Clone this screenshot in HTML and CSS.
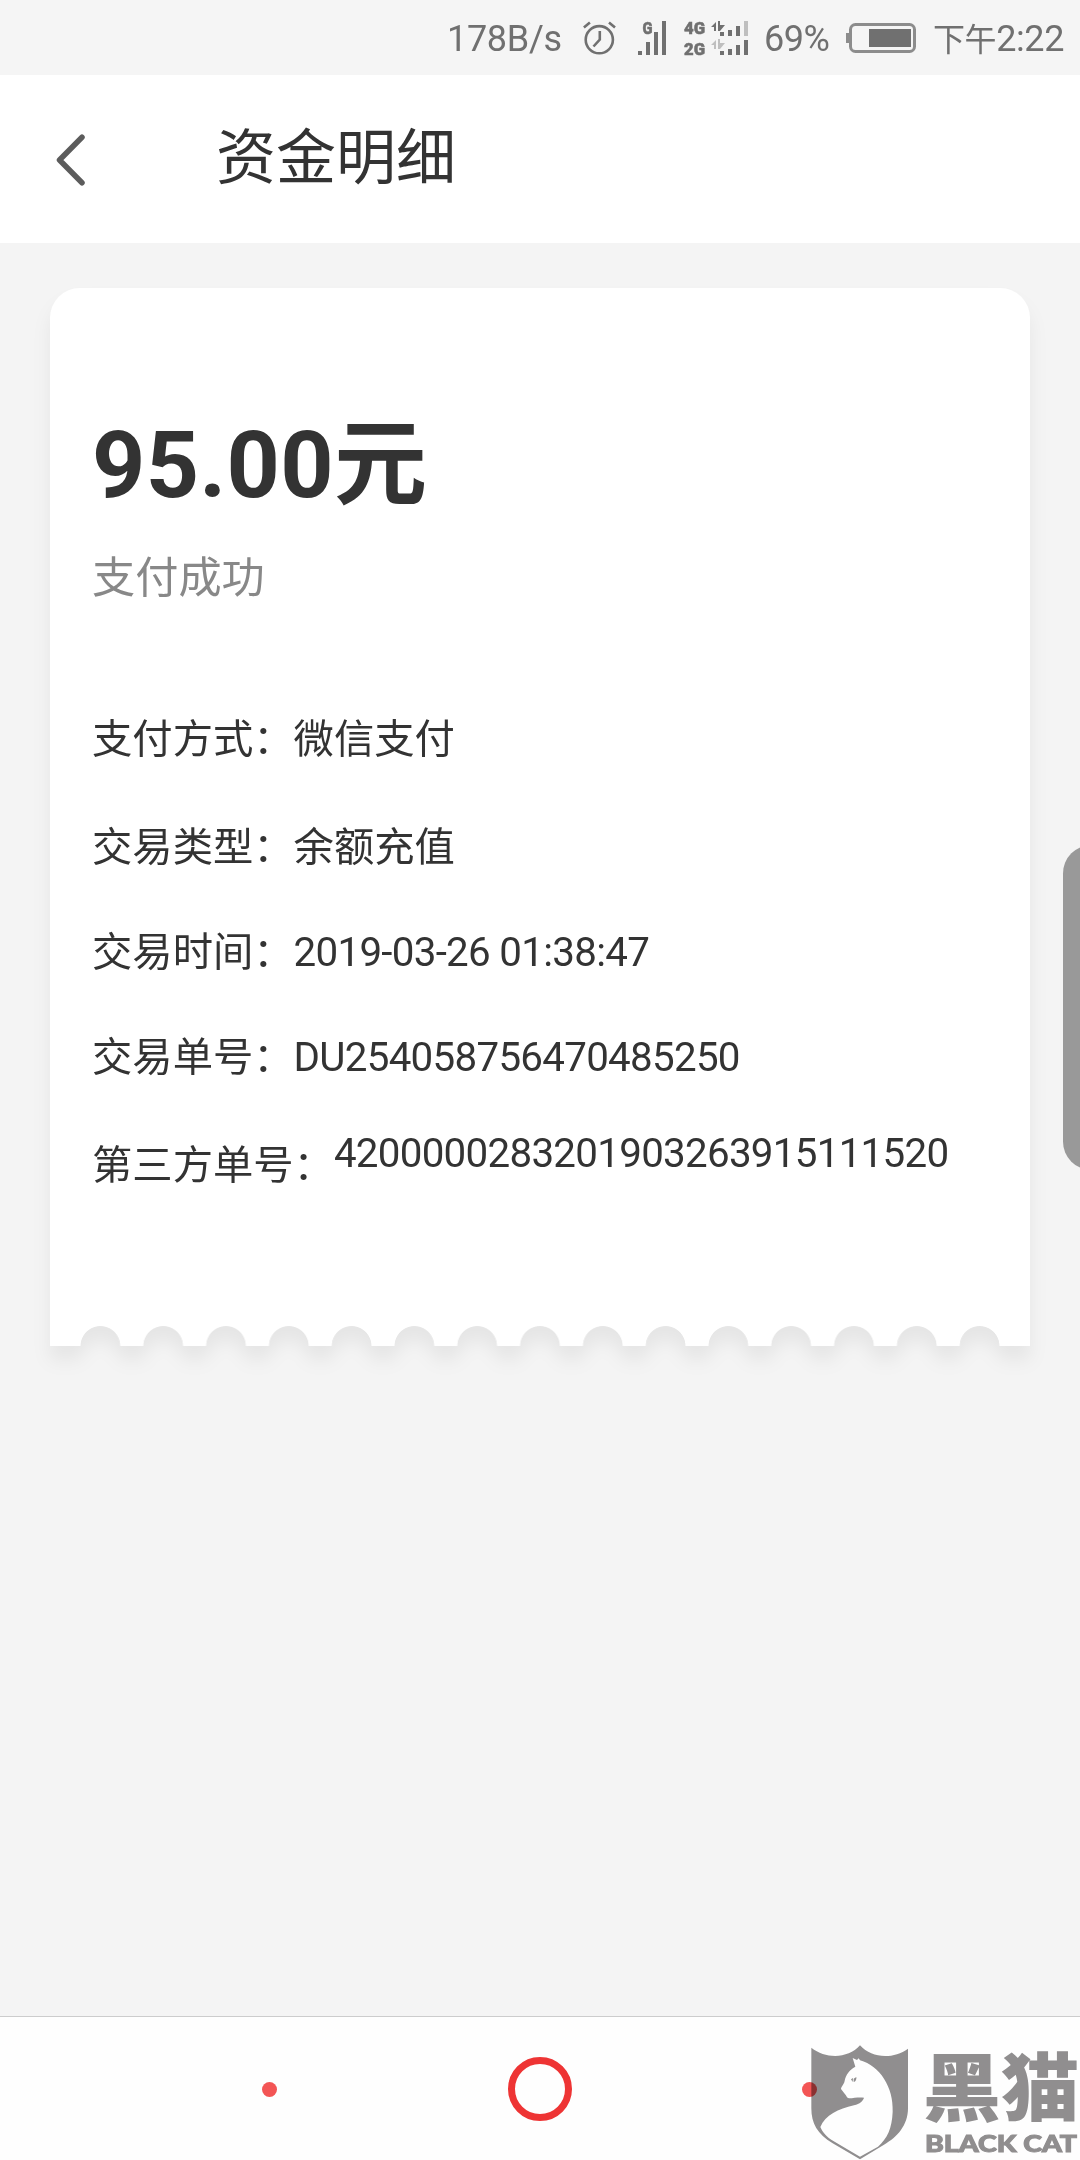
FILE: index.html
```
<!DOCTYPE html>
<html lang="zh-CN">
<head>
    <meta charset="UTF-8">
    <meta name="viewport" content="width=device-width, initial-scale=1.0">
    <title>资金明细</title>
    <link rel="stylesheet" href="styles.css">
</head>
<body>
    <div class="status-bar">
        <span class="net-speed">178B/s</span>
        <svg class="icon-alarm" width="34" height="34" viewBox="0 0 34 34" fill="none" stroke="#707070" stroke-width="2.6">
            <circle cx="16.3" cy="18.7" r="13.6"/>
            <path d="M16.8 10v8.5l-6.3 7M.9 6.5l6-5M26 1.500l6 5"/>
        </svg>
        <svg class="icon-signal" width="29" height="34" viewBox="0 0 29 34" fill="#707070">
            <text class="net-type" x="4.500" y="12.600" textLength="10" lengthAdjust="spacingAndGlyphs">G</text>
            <path d="M0 30h4v4H0zM8 21h4v13H8zM16 11h4v23h-4zM24 0h4v34h-4z"/>
        </svg>
        <svg class="icon-dual" width="65" height="34" viewBox="0 0 65 34" fill="#707070">
            <text class="net-type" x="0" y="12.600" textLength="21" lengthAdjust="spacingAndGlyphs">4G</text>
            <text class="net-type" x="0" y="33.600" textLength="21" lengthAdjust="spacingAndGlyphs">2G</text>
            <path d="M27 6l5-5v9h-2V6zM34 0h2v4h5l-5 6h-2zM36 11h4v4h-4zM44 9h4v6h-4zM52 5h4v10h-4z"/>
            <path d="M36 30h4v4h-4zM44 28h4v6h-4zM52 24h4v10h-4zM60 19h4v15h-4z"/>
            <path fill="#bfbfbf" d="M60 0h4v15h-4zM27 24l5-5v9h-2v-4zM34 18h2v4h5l-5 6h-2z"/>
        </svg>
        <span class="battery-text">69%</span>
        <svg class="icon-battery" width="70" height="30" viewBox="0 0 70 30">
            <rect x="4.500" y="1.500" width="64" height="27" rx="5" fill="none" stroke="#8c8c8c" stroke-width="3"/>
            <rect x="0" y="10" width="4" height="10" fill="#8c8c8c"/>
            <rect x="23" y="6" width="42" height="18" fill="#707070"/>
        </svg>
        <span class="clock"><small>下午</small>2:22</span>
    </div>

    <header class="title-bar">
        <svg class="back" width="30" height="52" viewBox="0 0 30 52" fill="none" stroke="#5c5c5c" stroke-width="5.500" stroke-linecap="round" stroke-linejoin="round">
            <path d="M26 3.200L3.500 26L26 48.800"/>
        </svg>
        <h1>资金明细</h1>
    </header>

    <main>
        <div class="card">
            <div class="card-body">
                <div class="amount">95.00元</div>
                <div class="state">支付成功</div>
                <ul class="detail">
                    <li class="tall"><span>支付方式：</span><span>微信支付</span></li>
                    <li><span>交易类型：</span><span>余额充值</span></li>
                    <li><span>交易时间：</span><span class="num">2019-03-26 01:38:47</span></li>
                    <li><span>交易单号：</span><span class="num">DU254058756470485250</span></li>
                    <li class="third"><span>第三方单号：</span><span class="num">4200000283201903263915111520</span></li>
                </ul>
            </div>
            <div class="card-edge"></div>
        </div>
    </main>

    <nav class="nav-bar">
        <span class="dot"></span>
        <span class="home"></span>
        <span class="dot"></span>
    </nav>

    <div class="side-handle"></div>

    <svg class="watermark" width="300" height="160" viewBox="0 0 900 480">
        <path fill="#918f90" d="M94 143C138 178 205 176 240 136C275 176 340 178 384 146V325C384 375 352 412 312 434L240 478L158 430C112 402 94 370 94 325Z"/>
        <path fill="#fff" d="M218 174L231 180L236 175L240 181C300 198 341 262 338 335C336 385 322 415 294 440L240 470L160 423C140 411 128 398 121 381C136 345 175 327 222 316C240 311 249 303 252 293C236 291 222 294 207 295C200 293 199 286 194 281L183 267C184 258 192 254 194 242C198 224 208 210 226 200Z"/>
        <path fill="#918f90" d="M213 238l6-4-1 12zM221 236l8-5c1 8-2 14-8 15z"/>
        <text class="mark-cn" x="428" y="346" textLength="470" lengthAdjust="spacingAndGlyphs">黑猫</text>
        <text class="mark-en" x="435" y="457" textLength="456" lengthAdjust="spacingAndGlyphs">BLACK CAT</text>
    </svg>
</body>
</html>
```

FILE: styles.css
```
* {
    box-sizing: border-box;
}

body {
    margin: 0;
    height: 2160px;
    display: flex;
    flex-direction: column;
    position: relative;
    overflow: hidden;
    background: #f4f4f4;
    color: #333;
    font-family: Roboto, "Noto Sans CJK SC", sans-serif;
}

.status-bar {
    display: flex;
    align-items: center;
    justify-content: flex-end;
    height: 75px;
    padding-right: 14px;
    background: #f5f5f5;
    color: #707070;
    font-size: 36px;
    line-height: 71px;
    white-space: nowrap;
}

.status-bar span {
    padding-top: 4px;
}

.net-speed {
    width: 118px;
    letter-spacing: -0.3px;
    margin-right: 18px;
}

.icon-alarm {
    margin-right: 21px;
}

.icon-signal {
    margin-right: 17px;
    overflow: visible;
}

.icon-dual {
    margin-right: 15px;
    overflow: visible;
}

.net-type {
    font-size: 17px;
    font-weight: 900;
    stroke: #707070;
    stroke-width: 0.5;
}

.battery-text {
    width: 68px;
    letter-spacing: -0.5px;
    margin-right: 14px;
}

.icon-battery {
    margin-right: 17px;
}

.clock {
    width: 133px;
    letter-spacing: -0.4px;
}

.clock small {
    font-size: 32px;
}

.title-bar {
    display: flex;
    align-items: center;
    height: 168px;
    padding: 0 56px;
    background: #fff;
}

.back {
    margin: 2px 130px 0 0;
}

.title-bar h1 {
    margin: 0;
    font-size: 60px;
    font-weight: 400;
    line-height: 80px;
    padding-bottom: 1px;
}

main {
    flex: 1;
    padding: 45px 50px 0;
}

.card {
    filter: drop-shadow(0 14px 9px rgba(0, 0, 0, 0.06));
}

.card-body {
    height: 1038px;
    padding: 123px 42px 0;
    background: #fff;
    border-radius: 30px 30px 0 0;
}

/* row of half circles cut out of the bottom of the receipt */
.card-edge {
    height: 20px;
    border: solid #fff;
    border-width: 0 19px;
    background: radial-gradient(circle at 50% 100%, transparent 19.5px, #fff 20.3px) 0 0 / 62.8px 20px repeat-x;
    background-origin: padding-box;
    background-clip: padding-box;
}

.amount {
    font-size: 93px;
    font-weight: 700;
    letter-spacing: 0.3px;
    line-height: 110px;
}

.state {
    margin-top: 28px;
    color: #888;
    font-size: 43.2px;
    line-height: 60px;
}

.detail {
    list-style: none;
    margin: 101px 0 0;
    padding: 0;
    font-size: 40.32px;
}

.detail li {
    display: flex;
    height: 105px;
    line-height: 60px;
}

.detail .tall {
    height: 108px;
}

.num {
    letter-spacing: -0.71px;
}

.third .num {
    margin-top: -9px;
}

.third span:first-child {
    margin-top: 3px;
}

.nav-bar {
    display: flex;
    align-items: center;
    justify-content: space-between;
    height: 144px;
    padding: 1px 263px 0 262px;
    border-top: 1px solid #ccc;
    background: #fefefe;
}

.dot {
    width: 15px;
    height: 15px;
    border-radius: 50%;
    background: #f35555;
}

.home {
    width: 64px;
    height: 64px;
    border: 7px solid #ee3434;
    border-radius: 50%;
}

.side-handle {
    position: absolute;
    top: 845px;
    right: -40px;
    width: 57px;
    height: 325px;
    border-radius: 36px;
    background: #999;
}

.watermark {
    position: absolute;
    right: 0;
    bottom: 0;
    mix-blend-mode: multiply;
}

.mark-cn {
    fill: #918f90;
    font-family: "Noto Sans CJK SC", sans-serif;
    font-size: 222px;
    font-weight: 900;
}

.mark-en {
    fill: #918f90;
    stroke: #918f90;
    stroke-width: 3;
    font-family: Lato, sans-serif;
    font-size: 66px;
    font-weight: 900;
}
```
